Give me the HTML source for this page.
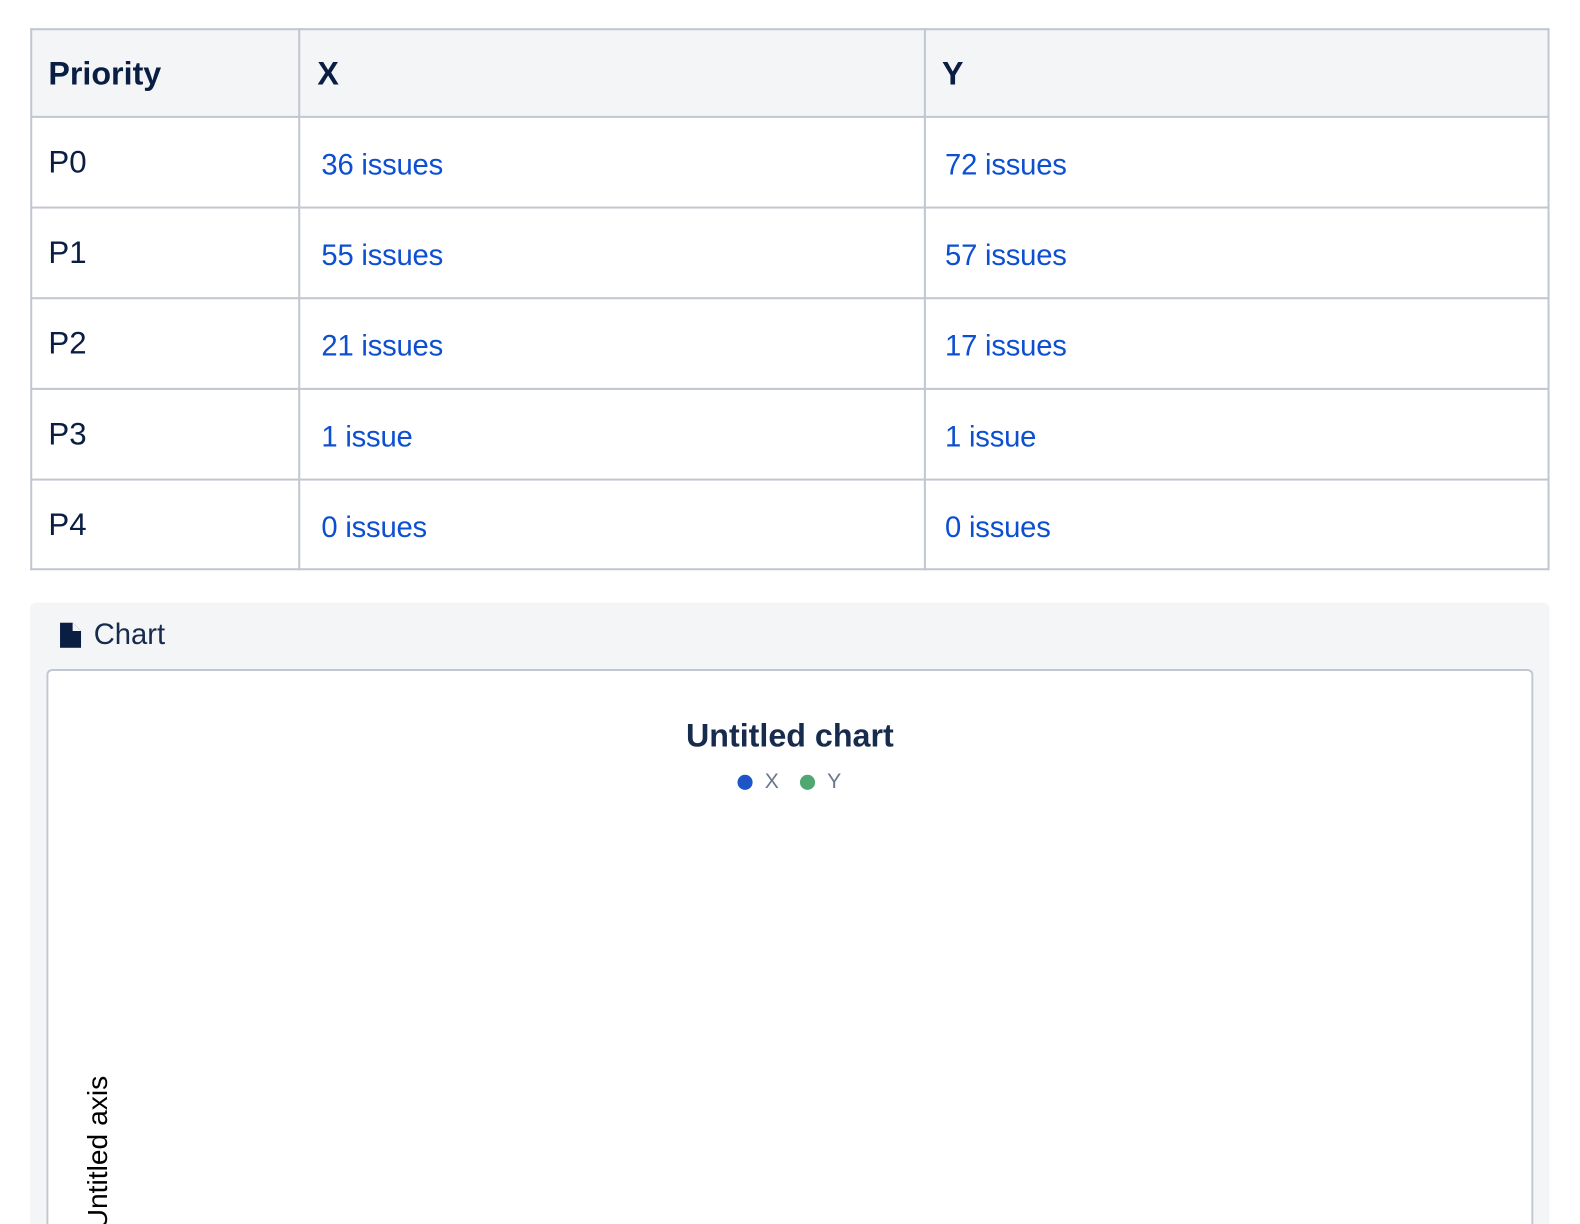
<!DOCTYPE html>
<html><head><style>
html,body{margin:0;background:#fff;width:1580px;height:1224px;overflow:hidden}
body{font-family:"Liberation Sans",sans-serif;color:#172b4d;position:relative}
.t{position:absolute;white-space:nowrap}
.hl{position:absolute;background:#c1c7d0;height:2px;left:30px;width:1508px}
.vl{position:absolute;background:#c1c7d0;width:2px;top:28px;height:538px}
.th{font-size:32px;font-weight:bold;color:#091e42;top:55px}
.p{font-size:31px;color:#091e42}
.a{font-size:29px;color:#0c4fd0;letter-spacing:-0.2px}
.panel{position:absolute;left:30px;top:598px;width:1508px;height:626px;background:#f4f5f7;border-radius:6px 6px 0 0}
.box{position:absolute;left:46px;top:664px;width:1476px;height:560px;box-sizing:border-box;background:#fff;border:2px solid #c1c7d0;border-bottom:none;border-radius:6px 6px 0 0}
.title{position:absolute;left:0;width:1568px;top:712px;text-align:center;font-size:32px;font-weight:bold;color:#172b4d}
.leg{position:absolute;top:764px;font-size:21px;color:#6b778c}
.dot{position:absolute;top:769px;width:15px;height:15px;border-radius:50%}
.axis{position:absolute;left:97px;top:1144px;font-size:28px;color:#000;transform:translate(-50%,-50%) rotate(-90deg);white-space:nowrap}
.clip{position:absolute;left:0;top:0;width:1580px;height:1224px;overflow:hidden}
.sc{position:absolute;left:0;top:0;width:1568px;height:1215px;transform:scale(1.0075);transform-origin:0 0}
</style></head><body><div class="clip"><div class="sc">
<div style="position:absolute;left:30px;top:28px;width:1508px;height:88px;background:#f4f5f7"></div>
<div class="hl" style="top:28px"></div><div class="hl" style="top:115px"></div>
<div class="hl" style="top:205px"></div><div class="hl" style="top:295px"></div>
<div class="hl" style="top:385px"></div><div class="hl" style="top:475px"></div><div class="hl" style="top:564px"></div>
<div class="vl" style="left:30px"></div><div class="vl" style="left:296px"></div><div class="vl" style="left:917px"></div><div class="vl" style="left:1536px"></div>
<div class="t th" style="left:48px">Priority</div><div class="t th" style="left:315px">X</div><div class="t th" style="left:935px">Y</div>
<div class="t p" style="left:48px;top:143px">P0</div><div class="t a" style="left:319px;top:148px">36 issues</div><div class="t a" style="left:938px;top:148px">72 issues</div>
<div class="t p" style="left:48px;top:233px">P1</div><div class="t a" style="left:319px;top:238px">55 issues</div><div class="t a" style="left:938px;top:238px">57 issues</div>
<div class="t p" style="left:48px;top:323px">P2</div><div class="t a" style="left:319px;top:328px">21 issues</div><div class="t a" style="left:938px;top:328px">17 issues</div>
<div class="t p" style="left:48px;top:413px">P3</div><div class="t a" style="left:319px;top:418px">1 issue</div><div class="t a" style="left:938px;top:418px">1 issue</div>
<div class="t p" style="left:48px;top:503px">P4</div><div class="t a" style="left:319px;top:508px">0 issues</div><div class="t a" style="left:938px;top:508px">0 issues</div>
<div class="panel"></div>
<svg style="position:absolute;left:59px;top:618px" width="22" height="25" viewBox="0 0 20 24"><path d="M0 0H12L20 8V24H0Z" fill="#091e42"/><path d="M12 0V8H20Z" fill="#f4f5f7"/></svg>
<div class="t" style="left:93px;top:614px;font-size:29px;color:#172b4d">Chart</div>
<div class="box"></div>
<div class="title">Untitled chart</div>
<div class="dot" style="left:732px;background:#1d55c9"></div><div class="leg" style="left:759px">X</div>
<div class="dot" style="left:794px;background:#4fa872"></div><div class="leg" style="left:821px">Y</div>
<div class="axis">Untitled axis</div>
</div></div></body></html>
